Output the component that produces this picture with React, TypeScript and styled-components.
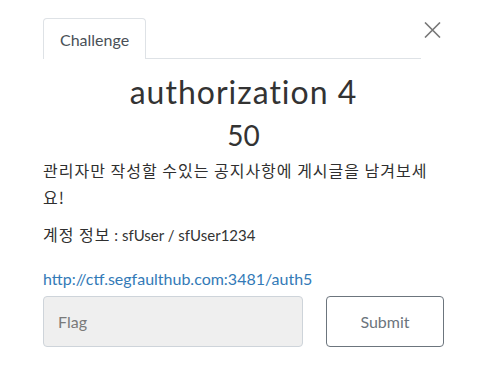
import styled, { createGlobalStyle } from 'styled-components';

const GlobalStyle = createGlobalStyle`
  html, body {
    margin: 0;
    padding: 0;
    background: #ffffff;
  }
  body {
    font-family: Lato, "Noto Sans CJK KR", sans-serif;
    color: #333333;
  }
`;

const Modal = styled.div`
  width: 401px;
  padding: 18px 0 0 43px;
`;

const Header = styled.div`
  display: flex;
  align-items: flex-start;
`;

const TabBar = styled.div`
  flex: 1;
  display: flex;
  border-bottom: 1px solid #dee2e6;
`;

const Tab = styled.div`
  padding: 0 16px;
  height: 40px;
  line-height: 42px;
  font-size: 16px;
  color: #495057;
  border: 1px solid #dee2e6;
  border-bottom: none;
  border-radius: 4px 4px 0 0;
  margin-bottom: -1px;
  background: #ffffff;
`;

const Close = styled.button`
  width: 23px;
  padding: 4px 0 0 3px;
  border: none;
  background: none;
  display: flex;
  cursor: pointer;
`;

const Title = styled.h1`
  margin: 13px 0 0;
  text-align: center;
  font-size: 32px;
  line-height: 40px;
  font-weight: 400;
  letter-spacing: 1px;
  color: #333333;
`;

const Points = styled.h2`
  margin: 6px 0 0;
  text-align: center;
  font-size: 28px;
  line-height: 34px;
  font-weight: 400;
  color: #333333;
`;

const Text = styled.p`
  margin: 6px 0 10px;
  font-size: 15px;
  line-height: 27px;
`;

const Ko = styled.span`
  font-family: "Noto Sans CJK KR", sans-serif;
  font-size: 16px;
  line-height: 20px;
  letter-spacing: 1px;
  color: #2f2f2f;
`;

const Link = styled.a`
  display: block;
  margin-top: 20px;
  font-size: 16px;
  line-height: 20px;
  color: #337ab7;
  text-decoration: none;
`;

const Form = styled.form`
  display: flex;
  justify-content: space-between;
  margin-top: 7px;
`;

const Input = styled.input`
  box-sizing: border-box;
  width: 260px;
  height: 51px;
  padding: 0 14px;
  font-family: Lato, sans-serif;
  font-size: 16px;
  background: #efefef;
  border: 1px solid #ced4da;
  border-radius: 4px;
  color: #333;
  &::placeholder {
    color: #7a7a7a;
  }
`;

const Button = styled.button`
  box-sizing: border-box;
  width: 118px;
  height: 51px;
  font-family: Lato, sans-serif;
  font-size: 16px;
  color: #6c757d;
  background: #ffffff;
  border: 1px solid #6c757d;
  border-radius: 4px;
`;

export default function App() {
  return (
    <>
      <GlobalStyle />
      <Modal>
        <Header>
          <TabBar>
            <Tab>Challenge</Tab>
          </TabBar>
          <Close aria-label="close">
            <svg width="17" height="16" viewBox="0 0 17 16">
              <path d="M1 0.5 L16 15.5 M16 0.5 L1 15.5" stroke="#777777" strokeWidth="1.6" />
            </svg>
          </Close>
        </Header>
        <Title>authorization 4</Title>
        <Points>50</Points>
        <Text>
          <Ko>관리자만 작성할 수있는 공지사항에 게시글을 남겨보세요!</Ko>
        </Text>
        <Text>
          <Ko>계정 정보</Ko> : sfUser / sfUser1234
        </Text>
        <Link href="#">http://ctf.segfaulthub.com:3481/auth5</Link>
        <Form onSubmit={(e) => e.preventDefault()}>
          <Input placeholder="Flag" />
          <Button type="submit">Submit</Button>
        </Form>
      </Modal>
    </>
  );
}
